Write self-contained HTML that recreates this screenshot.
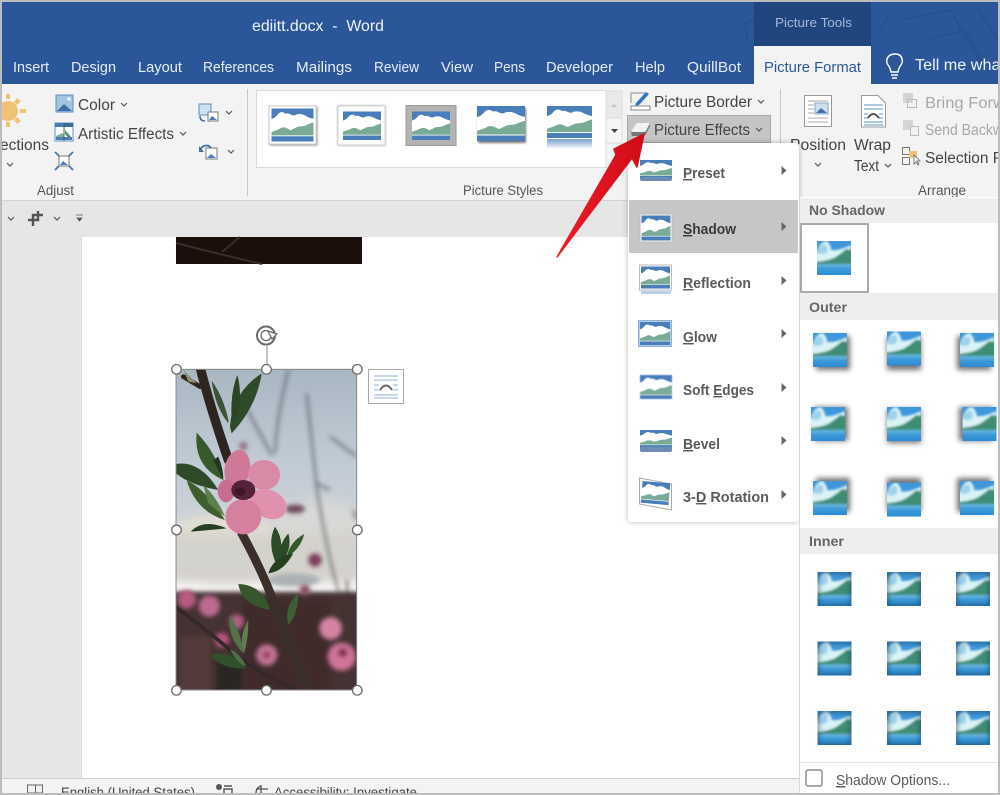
<!DOCTYPE html>
<html><head><meta charset="utf-8"><title>Word</title>
<style>
html,body{margin:0;padding:0;width:1000px;height:795px;overflow:hidden;background:#fff}
svg{display:block}
text{font-family:"Liberation Sans",sans-serif}
.tab{font-size:15px;fill:#e6ecf5}
.rb{font-size:15.5px;fill:#444}
.lb{font-size:13.5px;fill:#555}
.m{font-size:14.5px;font-weight:bold;fill:#5a5a5a}
.h{font-size:14px;font-weight:bold;fill:#666}
.ch{fill:none;stroke:#555;stroke-width:1.2}
</style></head><body>
<svg width="1000" height="795" viewBox="0 0 1000 795" xmlns="http://www.w3.org/2000/svg">
<defs>
<linearGradient id="sea" x1="0" y1="0" x2="0" y2="1"><stop offset="0" stop-color="#6fbce0"/><stop offset=".35" stop-color="#3b9ad8"/><stop offset="1" stop-color="#2b86d0"/></linearGradient>
<linearGradient id="fsky" x1="0" y1="0" x2="0" y2="1"><stop offset="0" stop-color="#a9b7c3"/><stop offset=".6" stop-color="#c2ccd5"/><stop offset="1" stop-color="#ced3d7"/></linearGradient>
<linearGradient id="red" x1="0" y1="0" x2="1" y2="0"><stop offset="0" stop-color="#ee1c25"/><stop offset="1" stop-color="#cf0c18"/></linearGradient>
<linearGradient id="refl" x1="0" y1="0" x2="0" y2="1"><stop offset="0" stop-color="#4a7ebb"/><stop offset="1" stop-color="#fff"/></linearGradient>
<filter id="b1" x="-30%" y="-30%" width="160%" height="160%"><feGaussianBlur stdDeviation="2.6"/></filter>
<filter id="b2" x="-20%" y="-20%" width="140%" height="140%"><feGaussianBlur stdDeviation="1.6"/></filter>
<filter id="bt" x="-10%" y="-10%" width="120%" height="120%"><feGaussianBlur stdDeviation="1"/></filter>
<filter id="bf" x="-30%" y="-30%" width="160%" height="160%"><feGaussianBlur stdDeviation="7"/></filter>
<filter id="bl" x="-30%" y="-30%" width="160%" height="160%"><feGaussianBlur stdDeviation="16"/></filter>
<filter id="bs" x="-30%" y="-30%" width="160%" height="160%"><feGaussianBlur stdDeviation="1"/></filter>
<filter id="ms" x="-10%" y="-10%" width="120%" height="120%"><feGaussianBlur stdDeviation="3"/></filter>
<clipPath id="fc"><rect x="48" y="148" width="542" height="962"/></clipPath>
<clipPath id="lc"><rect width="34" height="34"/></clipPath>
<clipPath id="tclip"><rect x="0" y="0" width="1000" height="793"/></clipPath>
<symbol id="pic" viewBox="0 0 48 38" preserveAspectRatio="none">
<rect width="48" height="38" fill="#4a7ebb"/>
<path d="M0 12Q4 11 7 7Q11 2 16 6Q19 5 22 7Q26 9 28 7Q34 5 40 9Q44 11 48 12V32H0Z" fill="#fff"/>
<path d="M0 31V27L8 24Q12 21 16 22L22 25L30 21L38 20Q44 17 48 16V31Z" fill="#7aab97"/>
</symbol>
<symbol id="lake" viewBox="0 0 34 34">
<g clip-path="url(#lc)">
<rect width="34" height="34" fill="#3f96da"/>
<g filter="url(#bt)">
<path d="M-2 14Q3 0 10 0Q15 6 14 9Q22 10 34 4V24H-2Z" fill="#d9f3f6"/>
<path d="M0 9Q5 2 9 4Q12 8 9 12Q4 14 0 12Z" fill="#9fd2ea"/>
<path d="M-2 21Q10 20 17 17Q25 12 29 8L36 9V24H-2Z" fill="#3f8d76"/>
<path d="M-2 23H36V36H-2Z" fill="url(#sea)"/>
</g>
</g>
</symbol>
<symbol id="inn" viewBox="0 0 34 34">
<use href="#lake" width="34" height="34"/>
<g clip-path="url(#lc)"><rect x="-1" y="-1" width="36" height="36" fill="none" stroke="#123a5a" stroke-width="5" filter="url(#b1)" opacity=".6"/></g>
</symbol>
</defs>

<rect width="1000" height="795" fill="#fff"/>
<!-- title bar -->
<rect width="1000" height="84" y="0" fill="#2b579a"/>
<g fill="none" stroke="#274f8e" stroke-width="1.6">
<path d="M900 20L950 10L985 70M925 40L965 30L985 66M975 5L998 40M748 40Q742 25 750 20Q758 22 758 40M880 30L890 15"/>
</g>
<rect x="754" y="2" width="117" height="44" fill="#21467f"/>
<text x="775" y="27" font-size="12.5" fill="#a4b8d6" textLength="77" lengthAdjust="spacingAndGlyphs">Picture Tools</text>
<text x="252" y="31" font-size="15.5" fill="#eef2f8" textLength="132" lengthAdjust="spacingAndGlyphs" xml:space="preserve">ediitt.docx  -  Word</text>
<g class="tab">
<text class="tab" x="13" y="72" textLength="36" lengthAdjust="spacingAndGlyphs">Insert</text>
<text class="tab" x="71" y="72" textLength="45" lengthAdjust="spacingAndGlyphs">Design</text>
<text class="tab" x="138" y="72" textLength="44" lengthAdjust="spacingAndGlyphs">Layout</text>
<text class="tab" x="203" y="72" textLength="71" lengthAdjust="spacingAndGlyphs">References</text>
<text class="tab" x="296" y="72" textLength="56" lengthAdjust="spacingAndGlyphs">Mailings</text>
<text class="tab" x="374" y="72" textLength="45" lengthAdjust="spacingAndGlyphs">Review</text>
<text class="tab" x="441" y="72" textLength="32" lengthAdjust="spacingAndGlyphs">View</text>
<text class="tab" x="494" y="72" textLength="31" lengthAdjust="spacingAndGlyphs">Pens</text>
<text class="tab" x="546" y="72" textLength="67" lengthAdjust="spacingAndGlyphs">Developer</text>
<text class="tab" x="635" y="72" textLength="30" lengthAdjust="spacingAndGlyphs">Help</text>
<text class="tab" x="687" y="72" textLength="54" lengthAdjust="spacingAndGlyphs">QuillBot</text>
</g>
<rect x="754" y="46" width="117" height="39" fill="#f3f3f3"/>
<text x="764" y="72" font-size="15" fill="#2b579a" textLength="97" lengthAdjust="spacingAndGlyphs">Picture Format</text>
<text x="915" y="70" font-size="15.5" fill="#f0f3f8" textLength="90" lengthAdjust="spacingAndGlyphs">Tell me what</text>
<g fill="none" stroke="#fff" stroke-width="1.4"><path d="M891 72Q890 67 888 65Q886 62 887 59Q889 54 895 54Q901 54 902 59Q903 62 901 65Q899 67 898 72Z"/><path d="M891 75H898M892 78H897"/></g>

<!-- ribbon -->
<rect y="84" width="1000" height="116" fill="#f3f3f3"/>
<rect y="200" width="1000" height="1" fill="#d4d4d4"/>
<!-- sun -->
<g fill="#f0c374"><circle cx="8" cy="111" r="10"/><rect x="6" y="94" width="4" height="5"/><rect x="6" y="122" width="4" height="5"/><rect x="20" y="109" width="6" height="4"/><path d="M17 98l4 3-4 4-3-3zM17 124l4-3-4-4-3 3z"/></g>
<text class="rb" x="0" y="150" textLength="49" lengthAdjust="spacingAndGlyphs">ections</text>
<path class="ch" d="M7 163l3 3 3-3"/>
<!-- color icon -->
<rect x="56" y="95" width="17" height="17" fill="#a5c3e3" stroke="#5f8fc0"/>
<path d="M57 111l7-7 8 7z" fill="#3f6ea8"/><circle cx="69" cy="99" r="1.6" fill="#fff"/>
<text class="rb" x="78" y="110" textLength="37" lengthAdjust="spacingAndGlyphs">Color</text>
<path class="ch" d="M121 103l3 3 3-3"/>
<!-- artistic -->
<rect x="55" y="123" width="18" height="18" fill="#fff" stroke="#5f8fc0"/><rect x="55" y="123" width="9" height="4" fill="#4a7ebb"/><rect x="64" y="123" width="9" height="4" fill="#356f9c"/><path d="M56 136l6-3 2 2V140H56z" fill="#7fae9b"/><path d="M65 130l7 8-2 2-5-6z" fill="#4c9470"/><rect x="56" y="137" width="16" height="3" fill="#4a7ebb"/><path d="M64 123v18" stroke="#555"/>
<text class="rb" x="78" y="139" textLength="96" lengthAdjust="spacingAndGlyphs">Artistic Effects</text>
<path class="ch" d="M180 132l3 3 3-3"/>
<!-- compress -->
<rect x="59" y="156" width="10" height="10" fill="#fff" stroke="#777"/><path d="M60 165l3-4 5 4z" fill="#4a7ebb"/>
<path d="M55 152l4 4M73 152l-4 4M55 170l4-4M73 170l-4-4" stroke="#3f6ea8" stroke-width="1.6"/>
<!-- change / reset -->
<rect x="199" y="104" width="12" height="11" fill="#cfe0f0" stroke="#5f8fc0"/><rect x="208" y="112" width="10" height="9" fill="#fff" stroke="#777"/><path d="M209 120l3-4 5 4z" fill="#4a7ebb"/><path d="M200 116q0 5 5 5" fill="none" stroke="#3f6ea8" stroke-width="1.5"/>
<path class="ch" d="M226 111l3 3 3-3"/>
<rect x="206" y="148" width="11" height="11" fill="#fff" stroke="#777"/><path d="M207 158l4-4 5 4z" fill="#4a7ebb"/><path d="M200 150q3-6 9-4l2 2" fill="none" stroke="#3f6ea8" stroke-width="1.8"/><path d="M199 146v6h5z" fill="#3f6ea8"/>
<path class="ch" d="M228 150l3 3 3-3"/>
<text class="lb" x="37" y="195" textLength="37" lengthAdjust="spacingAndGlyphs">Adjust</text>
<rect x="247" y="89" width="1" height="107" fill="#c8c8c8"/>

<!-- styles gallery -->
<rect x="256.500" y="90.500" width="350" height="77" fill="#fff" stroke="#dcdcdc"/>
<rect x="606" y="91" width="16" height="27" fill="#e9e9e9" stroke="#dcdcdc"/>
<rect x="606" y="118" width="16" height="25" fill="#f5f5f5" stroke="#dcdcdc"/>
<rect x="606" y="143" width="16" height="24" fill="#f5f5f5" stroke="#dcdcdc"/>
<path d="M611 107h6l-3-3z" fill="#c0c0c0"/><path d="M611 129h7l-3.500 4z" fill="#444"/>
<!-- thumbs -->
<rect x="269" y="106" width="47" height="38" fill="#fff" stroke="#ccc" style="filter:drop-shadow(1px 1px 1px #999)"/><use href="#pic" x="271.500" y="108.500" width="42" height="33"/>
<rect x="338" y="106" width="47" height="39" fill="#fff" stroke="#d0d0d0" style="filter:drop-shadow(0 0 1px #aaa)"/><use href="#pic" x="343" y="111.500" width="38" height="28.500"/>
<rect x="406" y="105.500" width="50" height="40" fill="#b3b3b3" stroke="#999"/><use href="#pic" x="412" y="111.500" width="38" height="28.500"/>
<use href="#pic" x="477" y="106" width="48" height="35" style="filter:drop-shadow(1px 2px 1px #777)"/>
<use href="#pic" x="547" y="106" width="45" height="32"/>
<rect x="547" y="139" width="45" height="10" fill="url(#refl)" opacity=".75"/>
<text class="lb" x="463" y="195" textLength="80" lengthAdjust="spacingAndGlyphs">Picture Styles</text>

<!-- picture border/effects -->
<rect x="631" y="106" width="19" height="4" fill="#fff" stroke="#888"/>
<path d="M631 103V93H645" fill="none" stroke="#888"/>
<path d="M636 103l10-11 3 2-10 11-4 1z" fill="#2f76bd"/>
<text class="rb" x="654" y="107" textLength="98" lengthAdjust="spacingAndGlyphs">Picture Border</text>
<path class="ch" d="M758 100l3 3 3-3"/>
<rect x="627.500" y="115.500" width="143" height="27" fill="#c5c5c5" stroke="#a9a9a9"/>
<path d="M632 136l-1-3 6-9q1-1 3-1h7q3 1 3 3l-4 8q-1 2-3 2h-9z" fill="#777"/>
<path d="M632 130l5-7h11q2 0 1 2l-3 6q-1 1-3 1h-10q-2 0-1-2z" fill="#f2f2f2"/>
<text class="rb" x="654" y="135" textLength="96" lengthAdjust="spacingAndGlyphs">Picture Effects</text>
<path class="ch" d="M756 128l3 3 3-3"/>
<rect x="780" y="89" width="1" height="107" fill="#c8c8c8"/>

<!-- position -->
<rect x="804.500" y="95.500" width="27" height="31" fill="#fff" stroke="#999"/>
<path d="M808 101h20M808 105h6M808 109h6M808 113h6M808 118h20M808 122h20" stroke="#aaa"/>
<rect x="815" y="103" width="13" height="11" fill="#cfe0f0" stroke="#7fa5cc"/><path d="M816 113l5-5 6 5z" fill="#3f6ea8"/>
<text class="rb" x="790" y="150" textLength="56" lengthAdjust="spacingAndGlyphs">Position</text>
<path class="ch" d="M815 163l3 3 3-3"/>
<!-- wrap -->
<path d="M861.500 95.500H878L885.500 103V127H861.500Z" fill="#fff" stroke="#999"/>
<path d="M864 105h19M864 109h19M864 122h19M864 125h19M864 114h4M879 114h4M864 118h4M879 118h4" stroke="#5d93c7"/>
<path d="M868 118q5-8 11 0" fill="none" stroke="#555" stroke-width="2"/>
<text class="rb" x="854" y="150" textLength="37" lengthAdjust="spacingAndGlyphs">Wrap</text>
<text class="rb" x="854" y="171" textLength="25" lengthAdjust="spacingAndGlyphs">Text</text>
<path class="ch" d="M885 164l3 3 3-3"/>
<!-- arrange -->
<rect x="903" y="93" width="10" height="10" fill="#d4d4d4"/><rect x="907.500" y="99.500" width="9" height="8" fill="none" stroke="#bbb"/>
<text x="925" y="108" font-size="15.5" fill="#a8a8a8" textLength="80" lengthAdjust="spacingAndGlyphs">Bring Forw</text>
<rect x="903" y="120" width="10" height="10" fill="#d4d4d4"/><rect x="910.500" y="126.500" width="8" height="9" fill="#f3f3f3" stroke="#bbb"/>
<text x="925" y="135" font-size="15.500" fill="#a8a8a8" textLength="78" lengthAdjust="spacingAndGlyphs">Send Backw</text>
<rect x="902.500" y="147.500" width="7" height="7" fill="none" stroke="#777"/><rect x="902.500" y="157.500" width="7" height="7" fill="none" stroke="#777"/><rect x="909" y="151" width="8" height="7" fill="#f0c374"/><path d="M914 155v9l2-2 2 3 1-1-2-3h3z" fill="#fff" stroke="#666" stroke-width=".8"/>
<text class="rb" x="925" y="163" textLength="78" lengthAdjust="spacingAndGlyphs">Selection P</text>
<text class="lb" x="918" y="195" textLength="48" lengthAdjust="spacingAndGlyphs">Arrange</text>

<!-- doc area -->
<rect y="201" width="1000" height="578" fill="#e6e6e6"/>
<rect x="82" y="237" width="918" height="541" fill="#fff"/>
<rect x="81" y="237" width="1" height="541" fill="#d8d8d8"/>
<path class="ch" d="M8 217l3 3 3-3M54 217l3 3 3-3"/>
<path d="M33 226V215H43M28 220H38V211" fill="none" stroke="#555" stroke-width="2.4"/>
<path d="M76 215h7M77 218h5l-2.500 3z" fill="#555" stroke="#555" stroke-width=".8"/>
<rect x="176" y="237" width="186" height="27" fill="#1b0f0c"/>
<path d="M176 243Q210 252 262 264M240 237L222 252" stroke="#3a2e22" stroke-width="2" fill="none"/>

<!-- flower -->
<g transform="translate(160 320) scale(.33333)">
<g clip-path="url(#fc)">
<rect x="48" y="148" width="542" height="500" fill="url(#fsky)"/>
<g filter="url(#bl)">
<ellipse cx="190" cy="690" rx="210" ry="110" fill="#e2ded4"/>
<ellipse cx="480" cy="640" rx="140" ry="100" fill="#d8d8d6"/>
<rect x="20" y="640" width="600" height="150" fill="#d4d2cc"/>
</g>
<rect x="30" y="815" width="580" height="320" fill="#453033" filter="url(#bf)"/>
<rect x="60" y="950" width="90" height="170" fill="#553a3a" filter="url(#bf)"/>
<rect x="170" y="1020" width="80" height="100" fill="#2a2523" filter="url(#bf)"/>
<rect x="250" y="840" width="260" height="280" fill="#3f2b2c" filter="url(#bf)"/>
<ellipse cx="400" cy="780" rx="80" ry="20" fill="#aab0b4" filter="url(#bf)"/>
<g fill="none" stroke="#50525c" stroke-width="7" filter="url(#bf)" opacity=".75">
<path d="M385 150Q350 290 345 400M262 270L335 405M440 220L470 500Q500 700 540 830M510 350L590 410M470 490L510 510M580 570L590 600"/>
<path d="M560 780L570 1000" stroke="#4a3a35"/>
</g>
<g filter="url(#bf)">
<circle cx="250" cy="378" r="12" fill="#8f6a80"/>
<ellipse cx="405" cy="567" rx="30" ry="13" fill="#6d4a5a"/>
<circle cx="465" cy="720" r="20" fill="#7c3c58"/>
<circle cx="80" cy="838" r="28" fill="#b45c82"/>
<circle cx="148" cy="858" r="32" fill="#bb6a90"/>
<circle cx="230" cy="905" r="22" fill="#b45c82"/>
<circle cx="185" cy="960" r="22" fill="#b4557c"/>
<circle cx="320" cy="1005" r="32" fill="#c47596"/><circle cx="320" cy="1005" r="11" fill="#8f2f55"/>
<circle cx="512" cy="925" r="34" fill="#d484a2"/>
<circle cx="545" cy="1010" r="42" fill="#cf7599"/><circle cx="548" cy="998" r="14" fill="#80264c"/>
<circle cx="435" cy="810" r="16" fill="#8c5066"/>
</g>
<!-- branches -->
<g fill="none" stroke="#2e2420" stroke-linecap="round">
<path d="M122 148Q150 260 205 420" stroke-width="28"/>
<path d="M245 640Q300 740 335 830Q380 950 445 1110" stroke-width="26" stroke="#3a3029"/>
<path d="M48 862Q140 930 250 1022Q320 1070 410 1110" stroke-width="11" stroke="#33282a"/>
<path d="M70 170L120 200" stroke-width="14"/>
</g>
<!-- leaves -->
<g fill="#2f4a28">
<path d="M210 320Q215 220 305 160Q290 260 215 340Z"/>
<path d="M215 300Q210 220 232 165Q248 220 232 290Z" fill="#2b4426"/>
<path d="M205 300Q190 230 155 182Q165 260 205 310Z" fill="#3a5434"/>
<path d="M190 480Q100 440 110 338Q170 400 190 480Z" fill="#37592c"/>
<path d="M48 432Q120 420 175 510Q90 495 48 460Z"/>
<path d="M175 410Q190 445 190 480L160 420Z" fill="#223820"/>
<path d="M80 482Q130 500 195 600Q110 575 80 482Z" fill="#3f5e30"/>
<path d="M130 495Q170 530 195 590L145 550Z" fill="#5f7f4a"/>
<path d="M92 635Q130 595 200 625Q150 630 92 635Z" fill="#263f22"/>
<path d="M345 620Q380 670 350 735Q320 670 345 620Z" fill="#2b4a27"/>
<path d="M385 640Q400 690 355 740Q350 680 385 640Z" fill="#2b4a27"/>
<path d="M433 642Q420 690 380 710Q390 665 433 642Z" fill="#345a2c"/>
<path d="M400 700Q370 755 325 760Q340 710 400 700Z" fill="#26401f"/>
<path d="M235 792Q310 795 330 870Q245 855 235 792Z" fill="#37562e"/>
<path d="M415 820Q415 880 385 915Q370 860 415 820Z" fill="#3d5f33"/>
<path d="M210 885Q245 940 250 1000Q200 950 210 885Z" fill="#54734a"/>
<path d="M265 900Q265 960 252 1000Q235 950 265 900Z" fill="#5f7f52"/>
<path d="M150 1005Q210 985 258 1045Q190 1050 150 1005Z" fill="#31502b"/>
<path d="M210 985Q250 1010 258 1040Q225 1025 210 985Z" fill="#4d6f42"/>
</g>
<path d="M70 150L110 190L85 185Z" fill="#8d8d6e"/>
<!-- main flower -->
<g filter="url(#bs)">
<ellipse cx="232" cy="447" rx="38" ry="58" fill="#cf7898" transform="rotate(10 232 447)"/>
<ellipse cx="312" cy="465" rx="48" ry="45" fill="#d98aa6"/>
<ellipse cx="325" cy="552" rx="58" ry="42" fill="#e091ad" transform="rotate(25 325 552)"/>
<ellipse cx="250" cy="590" rx="54" ry="53" fill="#d67f9f"/>
<ellipse cx="198" cy="513" rx="25" ry="34" fill="#c86d90"/>
<ellipse cx="250" cy="510" rx="36" ry="30" fill="#54203a"/>
<ellipse cx="240" cy="515" rx="16" ry="12" fill="#3f1426"/>
</g>
</g>
<rect x="48" y="148" width="542" height="962" fill="none" stroke="#888" stroke-width="3"/>
</g>
<path d="M267 346V369" stroke="#888"/>
<g fill="#fff" stroke="#6b6b6b" stroke-width="1.300">
<circle cx="176.500" cy="369.300" r="4.800"/><circle cx="266.500" cy="369.300" r="4.800"/><circle cx="357.300" cy="369.300" r="4.800"/>
<circle cx="176.500" cy="530" r="4.800"/><circle cx="357.300" cy="530" r="4.800"/>
<circle cx="176.500" cy="690.300" r="4.800"/><circle cx="266.500" cy="690.300" r="4.800"/><circle cx="357.300" cy="690.300" r="4.800"/>
</g>
<!-- rotate -->
<circle cx="266" cy="335.500" r="9" fill="none" stroke="#6b6b6b" stroke-width="2"/>
<circle cx="266" cy="335.500" r="5" fill="none" stroke="#6b6b6b" stroke-width="1.300"/>
<path d="M268 331l9 3-5 5z" fill="#fff" stroke="#6b6b6b" stroke-width="1.300"/>
<!-- layout options -->
<rect x="368.500" y="369.500" width="35" height="34" fill="#fff" stroke="#aaa"/>
<path d="M374 376h24M374 380h24M374 395h24M374 398h24M374 385h5M393 385h5M374 390h5M393 390h5" stroke="#8db2d6"/>
<path d="M380 390q6-9 12 0" fill="none" stroke="#666" stroke-width="2"/>

<!-- status bar -->
<rect y="778" width="1000" height="15" fill="#f3f3f3"/>
<rect y="778" width="1000" height="1" fill="#cfcfcf"/>
<g clip-path="url(#tclip)">
<text x="61" y="797" font-size="13.5" fill="#444" textLength="134" lengthAdjust="spacingAndGlyphs">English (United States)</text>
<text x="274" y="797" font-size="13.5" fill="#444" textLength="143" lengthAdjust="spacingAndGlyphs">Accessibility: Investigate</text>
<path d="M27.500 785h8v8h-8zM35.500 785h7v8h-7" fill="none" stroke="#666"/>
<circle cx="219" cy="787" r="3" fill="#555"/><path d="M224 786h8M224 789h8v5h-8z" fill="none" stroke="#555" stroke-width="1.400"/>
<path d="M256 793a7 7 0 0 1 5-7M261 785v9M256 789h12" fill="none" stroke="#555" stroke-width="1.300"/>
</g>

<!-- menu -->
<rect x="628" y="143" width="171" height="379" rx="3" fill="#000" opacity=".28" filter="url(#ms)"/>
<rect x="628" y="143" width="171" height="379" rx="3" fill="#fff"/>
<rect x="629" y="200" width="169" height="53" fill="#c6c6c6"/>
<!-- menu icons -->
<g>
<rect x="640" y="161" width="32" height="20" fill="#3b6fa6" rx="3"/><use href="#pic" x="640" y="160" width="32" height="19"/><rect x="640" y="177" width="32" height="4" rx="2" fill="#6c8cb3"/>
<rect x="640" y="214" width="32" height="28" fill="#fff" stroke="#bbb"/><use href="#pic" x="641.500" y="215.500" width="29" height="25"/>
<rect x="639.500" y="265" width="32" height="25" fill="#fff" stroke="#bbb"/><use href="#pic" x="641" y="266.500" width="29" height="22"/><rect x="641" y="291" width="30" height="3" fill="#b9cfe6"/>
<rect x="638.500" y="320.500" width="33" height="26" fill="#b4cbe6" stroke="#8fb0d6"/><use href="#pic" x="640" y="322" width="30" height="23"/>
<use href="#pic" x="640" y="375" width="32" height="24" style="filter:blur(.5px)"/>
<rect x="640" y="430" width="32" height="20" fill="#3b6fa6" rx="3"/><use href="#pic" x="640" y="430" width="32" height="18"/><rect x="640" y="447" width="32" height="5" rx="2" fill="#6c8cb3"/>
<path d="M639.500 478L671.500 484V510L639.500 504Z" fill="#fff" stroke="#aaa"/><use href="#pic" x="641.500" y="482" width="28" height="22" transform="rotate(5 655 493)"/>
</g>
<g class="m">
<text class="m" x="683" y="178" textLength="42" lengthAdjust="spacingAndGlyphs"><tspan text-decoration="underline">P</tspan>reset</text>
<text class="m" x="683" y="234" textLength="53" lengthAdjust="spacingAndGlyphs" style="fill:#3a3a3a"><tspan text-decoration="underline">S</tspan>hadow</text>
<text class="m" x="683" y="288" textLength="68" lengthAdjust="spacingAndGlyphs"><tspan text-decoration="underline">R</tspan>eflection</text>
<text class="m" x="683" y="342" textLength="34" lengthAdjust="spacingAndGlyphs"><tspan text-decoration="underline">G</tspan>low</text>
<text class="m" x="683" y="395" textLength="71" lengthAdjust="spacingAndGlyphs">Soft <tspan text-decoration="underline">E</tspan>dges</text>
<text class="m" x="683" y="449" textLength="37" lengthAdjust="spacingAndGlyphs"><tspan text-decoration="underline">B</tspan>evel</text>
<text class="m" x="683" y="502" textLength="86" lengthAdjust="spacingAndGlyphs">3-<tspan text-decoration="underline">D</tspan> Rotation</text>
</g>
<g fill="#666">
<path d="M781.500 166v9l5-4.500zM781.500 222v9l5-4.500zM781.500 276v9l5-4.500zM781.500 329v9l5-4.500zM781.500 383v9l5-4.500zM781.500 436v9l5-4.500zM781.500 490v9l5-4.500z"/>
</g>

<!-- gallery panel -->
<rect x="799" y="197" width="201" height="596" fill="#fff"/>
<rect x="799" y="197" width="1" height="596" fill="#d8d8d8"/>
<rect x="800" y="198" width="200" height="25" fill="#eeeeee"/>
<text class="h" x="809" y="215" textLength="76" lengthAdjust="spacingAndGlyphs">No Shadow</text>
<rect x="801" y="224" width="67" height="68" fill="#fff" stroke="#aaa" stroke-width="2"/>
<use href="#lake" x="817" y="241" width="34" height="34"/>
<rect x="800" y="293" width="200" height="27" fill="#eeeeee"/>
<text class="h" x="809" y="312" textLength="38" lengthAdjust="spacingAndGlyphs">Outer</text>
<!-- outer shadows -->
<g fill="#444" filter="url(#b1)" opacity=".75">
<rect x="816" y="336" width="34" height="34"/><rect x="887" y="336" width="34" height="34"/><rect x="957" y="336" width="34" height="34"/>
<rect x="814" y="407" width="34" height="34"/><rect x="887" y="409" width="34" height="34"/><rect x="959" y="407" width="34" height="34"/>
<rect x="816" y="478" width="34" height="34"/><rect x="887" y="478" width="34" height="34"/><rect x="957" y="478" width="34" height="34"/>
</g>
<g>
<use href="#lake" x="813" y="333" width="34" height="34"/><use href="#lake" x="887" y="331.500" width="34" height="34"/><use href="#lake" x="960" y="333" width="34" height="34"/>
<use href="#lake" x="811" y="407" width="34" height="34"/><use href="#lake" x="887" y="407" width="34" height="34"/><use href="#lake" x="962.500" y="407" width="34" height="34"/>
<use href="#lake" x="813" y="481" width="34" height="34"/><use href="#lake" x="887" y="482.500" width="34" height="34"/><use href="#lake" x="960" y="481" width="34" height="34"/>
</g>
<rect x="800" y="528" width="200" height="26" fill="#eeeeee"/>
<text class="h" x="809" y="546" textLength="35" lengthAdjust="spacingAndGlyphs">Inner</text>
<g>
<use href="#inn" x="817.500" y="572" width="34" height="34"/><use href="#inn" x="887" y="572" width="34" height="34"/><use href="#inn" x="956" y="572" width="34" height="34"/>
<use href="#inn" x="817.500" y="641.500" width="34" height="34"/><use href="#inn" x="887" y="641.500" width="34" height="34"/><use href="#inn" x="956" y="641.500" width="34" height="34"/>
<use href="#inn" x="817.500" y="711" width="34" height="34"/><use href="#inn" x="887" y="711" width="34" height="34"/><use href="#inn" x="956" y="711" width="34" height="34"/>
</g>
<rect x="800" y="762" width="200" height="1" fill="#e2e2e2"/>
<rect x="806" y="770" width="16" height="16" rx="2" fill="#fff" stroke="#8a8a8a" stroke-width="1.400"/>
<text x="836" y="785" font-size="14.500" fill="#5a5a5a" textLength="114" lengthAdjust="spacingAndGlyphs"><tspan text-decoration="underline">S</tspan>hadow Options...</text>

<!-- arrow -->
<path d="M644 134L614 149L616 155L557 257L632 158L637 167Z" fill="url(#red)" stroke="url(#red)" stroke-width="1.500" stroke-linejoin="round"/>

<!-- window border -->
<rect width="1000" height="2" fill="#bdbdbd"/>
<rect width="2" height="795" fill="#bdbdbd"/>
<rect x="998" width="2" height="795" fill="#bdbdbd"/>
<rect y="793" width="1000" height="2" fill="#bdbdbd"/>
</svg>
</body></html>
